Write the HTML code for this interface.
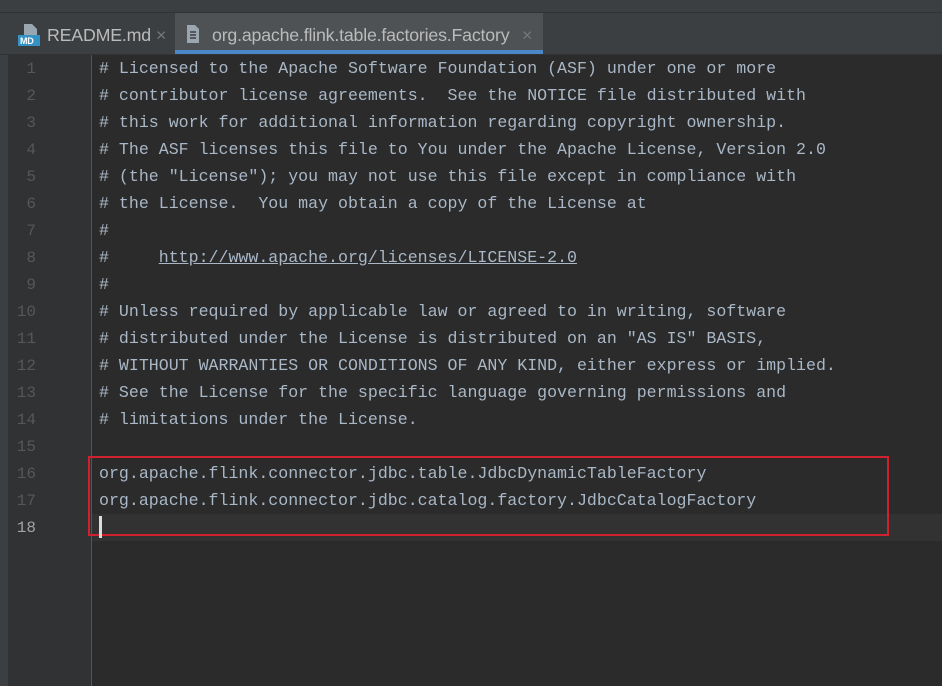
<!DOCTYPE html><html><head><style>
body{margin:0;width:942px;height:686px;overflow:hidden;background:#2b2b2b;font-family:"Liberation Sans",sans-serif;position:relative}
.top{position:absolute;left:0;top:0;width:942px;height:12px;background:#3c3f41;border-bottom:1px solid #323232}
.tabs{position:absolute;left:0;top:13px;width:942px;height:41px;background:#3c3f41;border-bottom:1px solid #323232}
.tab{position:absolute;top:0;height:41px;color:#bbbbbb;font-size:17.8px;line-height:44px;letter-spacing:-0.2px}
.side{position:absolute;left:0;top:55px;width:8px;height:631px;background:#3c3f41}
.gut{position:absolute;left:8px;top:55px;width:83px;height:631px;background:#303234;border-right:1px solid #555}
.ln{position:absolute;left:8px;width:28px;text-align:right;font:16px "Liberation Mono",monospace;color:#55585a}
.code{position:absolute;left:99px;font:16.6px "Liberation Mono",monospace;color:#a9b7c6;white-space:pre}
</style></head><body>
<div class="top"></div>
<div class="tabs">
<div class="tab" style="left:18px;width:152px">
<svg style="position:absolute;left:0;top:10px" width="24" height="24"><path d="M6 1h8l5 5v7H6z" fill="#9aa7b0"/><rect x="0" y="12" width="22" height="11" fill="#3592c4"/><text x="2" y="21" font-size="9" fill="#fff" font-family="Liberation Sans" font-weight="bold">MD</text></svg>
<span style="position:absolute;left:29px">README.md</span><span style="position:absolute;left:138px;color:#777">×</span></div>
<div class="tab" style="left:175px;width:368px;background:#4e5254">
<svg style="position:absolute;left:11px;top:11px" width="14" height="20"><path d="M1 1h8l4 4v14H1z" fill="#9aa7b0"/><path d="M4 8h6M4 11h6M4 14h6" stroke="#3c3f41" stroke-width="1.5"/></svg>
<span style="position:absolute;left:37px">org.apache.flink.table.factories.Factory</span><span style="position:absolute;left:347px;color:#777">×</span>
<div style="position:absolute;left:0;bottom:0;width:368px;height:4px;background:#4a88c7"></div></div>
</div>
<div class="side"></div>
<div class="gut"></div>
<div style="position:absolute;left:92px;top:514px;width:850px;height:27px;background:#323232"></div>
<div id="l"></div>
<div style="position:absolute;left:88px;top:456px;width:797px;height:76px;border:2px solid #d0222c"></div>
<div style="position:absolute;left:99px;top:516px;width:3px;height:22px;background:#ddd"></div>
<script>
var L=["# Licensed to the Apache Software Foundation (ASF) under one or more","# contributor license agreements.  See the NOTICE file distributed with","# this work for additional information regarding copyright ownership.","# The ASF licenses this file to You under the Apache License, Version 2.0","# (the \"License\"); you may not use this file except in compliance with","# the License.  You may obtain a copy of the License at","#","#     <u>http://www.apache.org/licenses/LICENSE-2.0</u>","#","# Unless required by applicable law or agreed to in writing, software","# distributed under the License is distributed on an \"AS IS\" BASIS,","# WITHOUT WARRANTIES OR CONDITIONS OF ANY KIND, either express or implied.","# See the License for the specific language governing permissions and","# limitations under the License.","","org.apache.flink.connector.jdbc.table.JdbcDynamicTableFactory","org.apache.flink.connector.jdbc.catalog.factory.JdbcCatalogFactory",""];
var h="";for(var i=0;i<18;i++){var y=59+i*27;h+='<div class="ln" style="top:'+(y+1)+'px;'+(i==17?'color:#a4a3a3':'')+'">'+(i+1)+'</div><div class="code" style="top:'+y+'px">'+L[i]+'</div>';}
document.getElementById("l").innerHTML=h;
</script>
</body></html>
